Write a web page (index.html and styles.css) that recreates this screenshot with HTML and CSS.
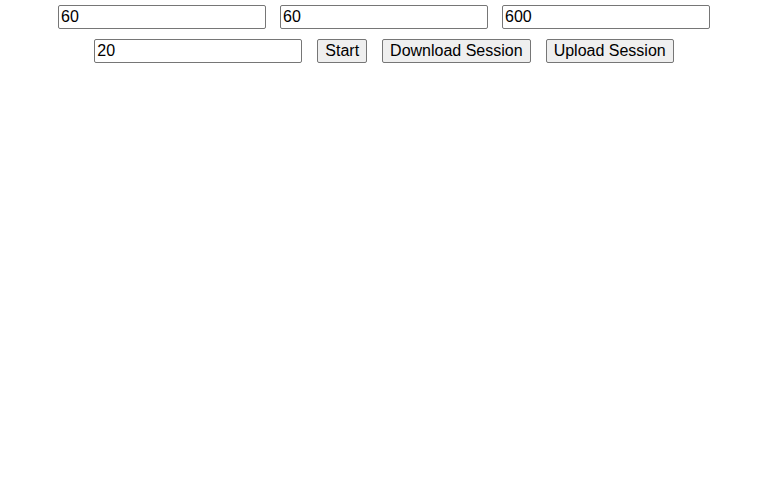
FILE: index.html
```html
<!DOCTYPE html>
<html>
<head>
<meta charset="utf-8">
<link rel="stylesheet" href="styles.css">
</head>
<body>
<div class="row row-top">
  <input class="field" type="text" value="60">
  <input class="field" type="text" value="60">
  <input class="field" type="text" value="600">
</div>
<div class="row row-bottom">
  <input class="field" type="text" value="20">
  <button class="btn">Start</button>
  <button class="btn">Download Session</button>
  <button class="btn">Upload Session</button>
</div>
</body>
</html>
```
FILE: styles.css
```css
html, body {
  margin: 0;
  padding: 0;
  background: #ffffff;
}
body {
  font-family: "Liberation Sans", Arial, sans-serif;
  font-size: 16px;
  color: #000;
  padding-top: 5px;
}
.row {
  display: flex;
  justify-content: center;
  align-items: center;
}
.row-top {
  gap: 14px;
}
.row-bottom {
  gap: 15px;
  margin-top: 10px;
}
.field {
  box-sizing: border-box;
  width: 208px;
  height: 24px;
  margin: 0;
  padding: 1px 2px;
  border: 1px solid #767676;
  border-radius: 2px;
  font-family: "Liberation Sans", Arial, sans-serif;
  font-size: 16px;
  color: #000;
  background: #fff;
}
.btn {
  box-sizing: border-box;
  height: 24px;
  margin: 0;
  padding: 1px 7px;
  border: 1px solid #767676;
  border-radius: 2px;
  background: #efefef;
  font-family: "Liberation Sans", Arial, sans-serif;
  font-size: 16px;
  color: #000;
}
```
